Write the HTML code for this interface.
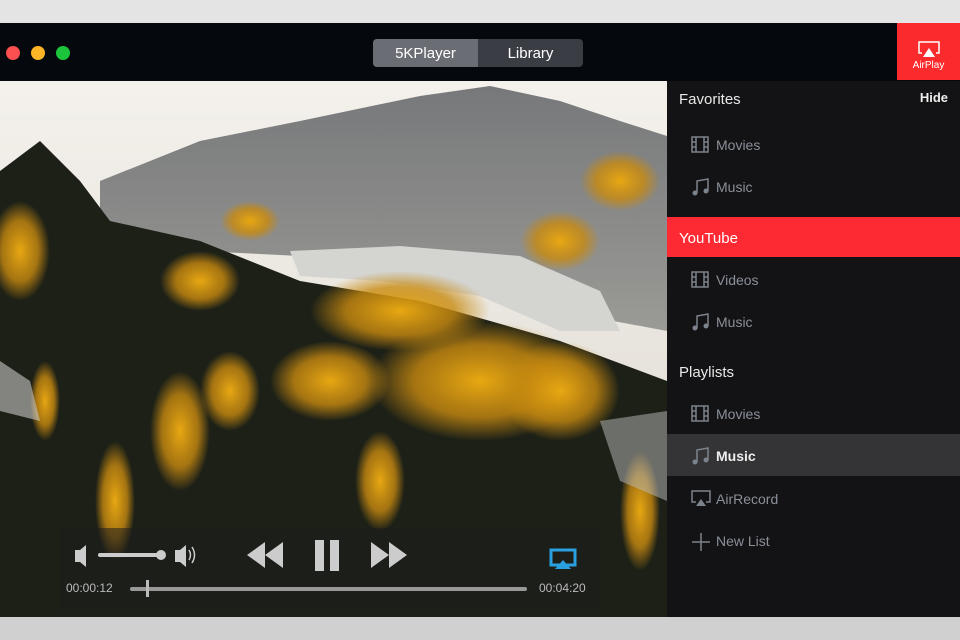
<!DOCTYPE html>
<html><head><meta charset="utf-8"><style>
*{margin:0;padding:0;box-sizing:border-box}
body{width:960px;height:640px;overflow:hidden;background:#e4e4e4;font-family:"Liberation Sans",sans-serif;position:relative}
.top{position:absolute;left:0;top:0;width:960px;height:23px;background:#e4e4e4}
.bar{position:absolute;left:0;top:23px;width:960px;height:58px;background:#05080c}
.dot{position:absolute;top:46px;width:14px;height:14px;border-radius:50%}
.seg{position:absolute;left:373px;top:39px;width:210px;height:28px;border-radius:4px;background:#3a3d44;overflow:hidden;color:#fff;font-size:15px}
.seg div{position:absolute;top:0;height:28px;line-height:29px;text-align:center}
.air{position:absolute;left:897px;top:23px;width:63px;height:57px;background:#fb2b2d;color:#fff;font-size:10px;text-align:center}
.bot{position:absolute;left:0;top:617px;width:960px;height:23px;background:#d0d0d0}
.side{position:absolute;left:667px;top:81px;width:293px;height:536px;background:#131315}
.h{position:absolute;left:12px;color:#e8e8e8;font-size:15px}
.it{position:absolute;left:24px;color:#8a8f98;font-size:14px;height:20px;line-height:20px}
.it svg{position:absolute;left:0;top:1px}
.it span{position:absolute;left:25px;white-space:nowrap}
.ctrl{position:absolute;left:60px;top:528px;width:540px;height:81px;background:rgba(30,30,30,.55)}
.t{position:absolute;color:#bbb;font-size:12px}
</style></head><body>
<div class="top"></div>
<div class="bar"></div>
<div class="dot" style="left:6px;background:#fc4f4f"></div>
<div class="dot" style="left:31px;background:#fdb427"></div>
<div class="dot" style="left:56px;background:#1bc43b"></div>
<div class="seg"><div style="left:0;width:105px;background:#6b6d74">5KPlayer</div><div style="left:105px;width:105px">Library</div></div>
<div class="air"><svg width="24" height="20" viewBox="0 0 24 20" style="margin-top:17px"><path d="M5 13H2V2h20v11h-3" fill="none" stroke="#fff" stroke-width="1.5"/><path d="M12 8l6 9H6z" fill="#fff"/></svg><div style="margin-top:-3px">AirPlay</div></div>

<svg style="position:absolute;left:0;top:81px" width="667" height="536" viewBox="0 0 667 536">
<defs>
<radialGradient id="y" cx="50%" cy="50%" r="50%"><stop offset="0" stop-color="#e8a812"/><stop offset=".6" stop-color="#c88a10" stop-opacity=".8"/><stop offset="1" stop-color="#c88a10" stop-opacity="0"/></radialGradient>
<linearGradient id="sky" x1="0" y1="0" x2="0" y2="1"><stop offset="0" stop-color="#f4f1ec"/><stop offset="1" stop-color="#dcd8cf"/></linearGradient>
<linearGradient id="mt" x1="0" y1="0" x2="0" y2="1"><stop offset="0" stop-color="#77787a"/><stop offset="1" stop-color="#9a9a96"/></linearGradient>
</defs>
<rect width="667" height="536" fill="url(#sky)"/>
<path d="M100 100 L200 60 L300 40 L420 15 L490 5 L560 20 L620 40 L667 55 L667 250 L560 230 L400 180 L200 170 L100 150Z" fill="url(#mt)"/>
<path d="M290 170 L400 165 L520 175 L600 210 L620 250 L560 250 L480 215 L380 200 L300 195Z" fill="#d4d4d0"/>
<path d="M0 90 L40 60 L80 100 L110 140 L200 160 L300 200 L420 220 L560 260 L667 300 L667 536 L0 536Z" fill="#1c2017"/>
<g fill="url(#y)">
<ellipse cx="400" cy="230" rx="90" ry="40"/><ellipse cx="480" cy="300" rx="110" ry="60"/><ellipse cx="330" cy="300" rx="60" ry="40"/>
<ellipse cx="560" cy="310" rx="60" ry="50"/><ellipse cx="20" cy="170" rx="30" ry="50"/><ellipse cx="180" cy="350" rx="30" ry="60"/>
<ellipse cx="115" cy="420" rx="20" ry="60"/><ellipse cx="45" cy="320" rx="15" ry="40"/><ellipse cx="380" cy="400" rx="25" ry="50"/>
<ellipse cx="640" cy="430" rx="20" ry="60"/><ellipse cx="200" cy="200" rx="40" ry="30"/><ellipse cx="560" cy="160" rx="40" ry="30"/>
<ellipse cx="620" cy="100" rx="40" ry="30"/><ellipse cx="250" cy="140" rx="30" ry="20"/><ellipse cx="230" cy="310" rx="30" ry="40"/>
</g>
<path d="M0 280 L30 300 L40 340 L0 330Z" fill="#c8c8c4" opacity=".6"/>
<path d="M600 340 L667 330 L667 420 L620 400Z" fill="#bbb" opacity=".5"/>
</svg>

<div class="ctrl"></div>
<svg style="position:absolute;left:60px;top:528px" width="540" height="81" viewBox="0 0 540 81">
<g fill="#ccc"><path d="M15 22h5l6-5v22l-6-5h-5z"/><rect x="38" y="25" width="62" height="4" rx="2"/><circle cx="101" cy="27" r="5"/>
<path d="M115 22h5l6-5v22l-6-5h-5z"/></g>
<path d="M129 22q3 5 0 10M132 19q5 8 0 16" stroke="#ccc" stroke-width="1.5" fill="none"/>
<g fill="#ccc"><path d="M203 27l18-13v26zM185 27l18-13v26z" transform="translate(2,0)"/>
<rect x="255" y="12" width="9" height="31"/><rect x="270" y="12" width="9" height="31"/>
<path d="M311 14l18 13-18 13zM329 14l18 13-18 13z"/></g>
<rect x="491" y="22" width="24" height="15" fill="none" stroke="#2aa0e0" stroke-width="3"/><path d="M503 32l8 9h-16z" fill="#2aa0e0"/>
<rect x="70" y="59" width="397" height="4" rx="2" fill="#999"/><rect x="86" y="52" width="3" height="17" fill="#bbb"/>
</svg>
<div class="t" style="left:66px;top:581px">00:00:12</div>
<div class="t" style="left:539px;top:581px">00:04:20</div>

<div class="side">
<div class="h" style="top:10px">Favorites</div>
<div style="position:absolute;right:12px;top:9px;color:#eee;font-size:13px;font-weight:bold">Hide</div>
<div class="it" style="top:54px"><svg width="18" height="17"><rect x="1" y="1" width="16" height="15" fill="none" stroke="#7d838c" stroke-width="1.5"/><path d="M5 1v15M13 1v15M1 6h4M1 11h4M13 6h4M13 11h4" stroke="#7d838c" stroke-width="1.5"/></svg><span>Movies</span></div>
<div class="it" style="top:96px"><svg width="18" height="18"><path d="M6 15V3l11-2v12" fill="none" stroke="#7d838c" stroke-width="1.5"/><circle cx="4" cy="15" r="2.5" fill="#7d838c"/><circle cx="15" cy="13" r="2.5" fill="#7d838c"/></svg><span>Music</span></div>
<div style="position:absolute;left:0;top:136px;width:293px;height:40px;background:#fd2a33"></div>
<div class="h" style="top:149px;color:#fff">YouTube</div>
<div class="it" style="top:189px"><svg width="18" height="17"><rect x="1" y="1" width="16" height="15" fill="none" stroke="#7d838c" stroke-width="1.5"/><path d="M5 1v15M13 1v15M1 6h4M1 11h4M13 6h4M13 11h4" stroke="#7d838c" stroke-width="1.5"/></svg><span>Videos</span></div>
<div class="it" style="top:231px"><svg width="18" height="18"><path d="M6 15V3l11-2v12" fill="none" stroke="#7d838c" stroke-width="1.5"/><circle cx="4" cy="15" r="2.5" fill="#7d838c"/><circle cx="15" cy="13" r="2.5" fill="#7d838c"/></svg><span>Music</span></div>
<div class="h" style="top:283px">Playlists</div>
<div class="it" style="top:323px"><svg width="18" height="17"><rect x="1" y="1" width="16" height="15" fill="none" stroke="#7d838c" stroke-width="1.5"/><path d="M5 1v15M13 1v15M1 6h4M1 11h4M13 6h4M13 11h4" stroke="#7d838c" stroke-width="1.5"/></svg><span>Movies</span></div>
<div style="position:absolute;left:0;top:353px;width:293px;height:42px;background:#343436"></div>
<div class="it" style="top:365px;color:#eee;font-weight:bold"><svg width="18" height="18"><path d="M6 15V3l11-2v12" fill="none" stroke="#7d838c" stroke-width="1.5"/><circle cx="4" cy="15" r="2.5" fill="#7d838c"/><circle cx="15" cy="13" r="2.5" fill="#7d838c"/></svg><span>Music</span></div>
<div class="it" style="top:408px"><svg width="20" height="17"><path d="M5 12H1V1h18v11h-4" fill="none" stroke="#7d838c" stroke-width="1.5"/><path d="M10 9l5 7H5z" fill="#7d838c"/></svg><span>AirRecord</span></div>
<div class="it" style="top:450px"><svg width="20" height="20"><path d="M10 1v18M1 10h18" stroke="#7d838c" stroke-width="1.5"/></svg><span>New List</span></div>
</div>
<div class="bot"></div>
</body></html>
